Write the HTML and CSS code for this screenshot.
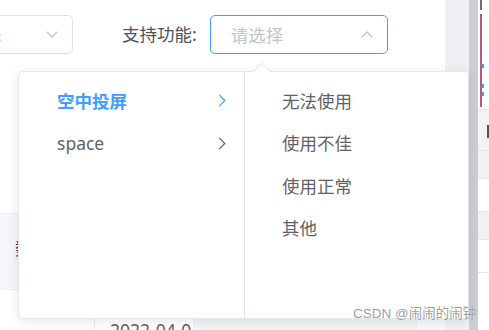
FILE: index.html
```html
<!DOCTYPE html>
<html lang="zh-CN">
<head>
<meta charset="utf-8">
<link rel="stylesheet" href="styles.css">
</head>
<body>
<div class="screen">
  <div class="main">
    <div class="content">
      <div class="filters">
        <div class="select select-left">
          <span class="ph">请选择</span>
          <svg class="chev" width="12" height="7" viewBox="0 0 12 7"><path d="M0.8 0.8 L6 6 L11.2 0.8" fill="none" stroke="#c0c4cc" stroke-width="1.3"/></svg>
        </div>
        <span class="label">支持功能:</span>
        <div class="select select-active">
          <span class="ph">请选择</span>
          <svg class="chev" width="12" height="7" viewBox="0 0 12 7"><path d="M0.8 6.2 L6 1 L11.2 6.2" fill="none" stroke="#c0c4cc" stroke-width="1.3"/></svg>
        </div>
      </div>
      <div class="table">
        <div class="row row-top"></div>
        <div class="row row-hover"><div class="cell c1"><span class="cell-text">数据</span></div></div>
        <div class="row row-plain">
          <div class="cell c1"></div>
          <div class="cell c2"><span class="date">2022-04-01</span></div>
          <div class="cell c3"></div>
          <div class="cell c4"></div>
        </div>
      </div>
    </div>
    <div class="fixed-col"></div>
  </div>
  <div class="scrollbar"></div>
  <div class="side">
    <div class="side-top">
      <div class="side-line">
        <span class="dot d1"></span><span class="dot d2"></span><span class="dot d3"></span>
      </div>
    </div>
    <div class="side-cell s1"><span class="side-bar"></span></div>
    <div class="side-cell s2"></div>
    <div class="side-cell s3"></div>
    <div class="side-cell s2"></div>
    <div class="side-cell s3"></div>
  </div>

  <div class="cascader">
    <span class="pointer"></span>
    <div class="menu menu-first">
      <div class="node active"><span>空中投屏</span><svg class="arrow" width="8" height="13" viewBox="0 0 8 13"><path d="M1.2 0.8 L6.8 6.5 L1.2 12.2" fill="none" stroke="#409eff" stroke-width="1.2"/></svg></div>
      <div class="node"><span>space</span><svg class="arrow" width="8" height="13" viewBox="0 0 8 13"><path d="M1.2 0.8 L6.8 6.5 L1.2 12.2" fill="none" stroke="#606266" stroke-width="1.2"/></svg></div>
    </div>
    <div class="menu menu-second">
      <div class="node"><span>无法使用</span></div>
      <div class="node"><span>使用不佳</span></div>
      <div class="node"><span>使用正常</span></div>
      <div class="node"><span>其他</span></div>
    </div>
  </div>

  <div class="watermark">CSDN @闹闹的闹钟</div>
</div>
</body>
</html>
```

FILE: styles.css
```css
* { box-sizing: border-box; }
html, body { margin: 0; padding: 0; background: #fff; }
body {
  font-family: "Noto Sans", "Noto Sans CJK SC", sans-serif;
  color: #606266;
  font-size: 17.5px;
}
.screen {
  position: relative;
  width: 489px;
  height: 330px;
  overflow: hidden;
  display: flex;
}
.main {
  width: 469px;
  display: flex;
  flex: none;
}
.content {
  width: 445px;
  flex: none;
  overflow: hidden;
}
.fixed-col {
  width: 24px;
  flex: none;
  background: #eef0f3;
}
.filters {
  height: 70px;
  display: flex;
  align-items: flex-start;
  padding-top: 15px;
}
.select {
  height: 39px;
  border: 1px solid #dcdfe6;
  border-radius: 5px;
  display: flex;
  align-items: center;
  justify-content: space-between;
  padding: 0 14px 0 20px;
  background: #fff;
  flex: none;
}
.select-left {
  margin-left: -72px;
  width: 145px;
}
.select-active {
  width: 178px;
  border-color: #409eff;
  margin-left: 13px;
}
.ph {
  color: #c0c4cc;
  line-height: 24px;
}
.label {
  margin-left: 49px;
  line-height: 39px;
  color: #505257;
  white-space: nowrap;
}
.table {
  display: flex;
  flex-direction: column;
}
.row { display: flex; border-bottom: 1px solid #ebeef5; }
.row-top { height: 144px; }
.row-hover { height: 76px; background: #f5f7fa; }
.row-plain { height: 60px; border-bottom: none; }
.cell { border-right: 1px solid #ebeef5; }
.row-hover .c1 { width: 95px; padding: 22px 0 0 15px; border-right: none; }
.cell-text { color: #303133; line-height: 24px; }
.row-plain .c1 { width: 95px; }
.row-plain .c2 { width: 99px; padding: 28px 0 0 15px; white-space: nowrap; overflow: hidden; }
.row-plain .c3 { width: 223px; background: #f2f3f5; }
.row-plain .c4 { width: 28px; border-right: none; background: #f7f8fa; }
.date { line-height: 24px; color: #606266; }

.scrollbar {
  width: 9px;
  flex: none;
  background: #cdced2;
}
.side {
  width: 11px;
  flex: none;
  display: flex;
  flex-direction: column;
  background: #fff;
}
.side-top {
  height: 110px;
  padding-left: 2px;
  border-bottom: 1px solid #e6e6e6;
}
.side-line {
  width: 2px;
  height: 107px;
  border-top: 10px solid #6e6e72;
  background: linear-gradient(#fff 0 4px, #b45878 4px);
  display: flex;
  flex-direction: column;
  gap: 4px;
  padding-top: 54px;
}
.dot { display: block; width: 3px; height: 4px; background: #2aa7d8; margin-left: 1px; }
.d1 { margin-bottom: 12px; }
.side-cell { border-bottom: 1px solid #e6e6e6; }
.s1 { height: 41px; background: #f3f3f3; display: flex; justify-content: flex-end; padding-top: 15px; }
.side-bar { width: 2px; height: 13px; background: #555; }
.s2 { height: 28px; background: #f2f2f2; }
.s3 { height: 33px; background: #fff; }

.cascader {
  position: absolute;
  left: 18px;
  top: 71px;
  width: 451px;
  height: 248px;
  background: #fff;
  border: 1px solid #e4e7ed;
  border-radius: 5px;
  box-shadow: 0 2px 12px 0 rgba(0, 0, 0, 0.1);
  display: flex;
}
.pointer {
  position: absolute;
  left: 237px;
  top: -7px;
  width: 12px;
  height: 12px;
  background: #fff;
  border-left: 1px solid #e4e7ed;
  border-top: 1px solid #e4e7ed;
  transform: rotate(45deg);
}
.menu {
  padding-top: 7.5px;
  display: flex;
  flex-direction: column;
}
.menu-first {
  width: 226px;
  border-right: 1px solid #e4e7ed;
}
.menu-second { flex: 1; }
.node {
  height: 42.5px;
  display: flex;
  align-items: center;
  justify-content: space-between;
  padding: 0 18px 0 38px;
  color: #606266;
  line-height: 24px;
}
.menu-second .node { padding-left: 37px; }
.node.active { color: #409eff; font-weight: 700; }
.arrow { flex: none; }
.watermark {
  position: absolute;
  left: 353px;
  top: 305px;
  font-family: "Liberation Sans", "Noto Sans CJK SC", sans-serif;
  font-size: 13.5px;
  line-height: 18px;
  color: rgba(140, 140, 140, 0.85);
  text-shadow: 0 0 1px #fff;
  white-space: nowrap;
}
```
